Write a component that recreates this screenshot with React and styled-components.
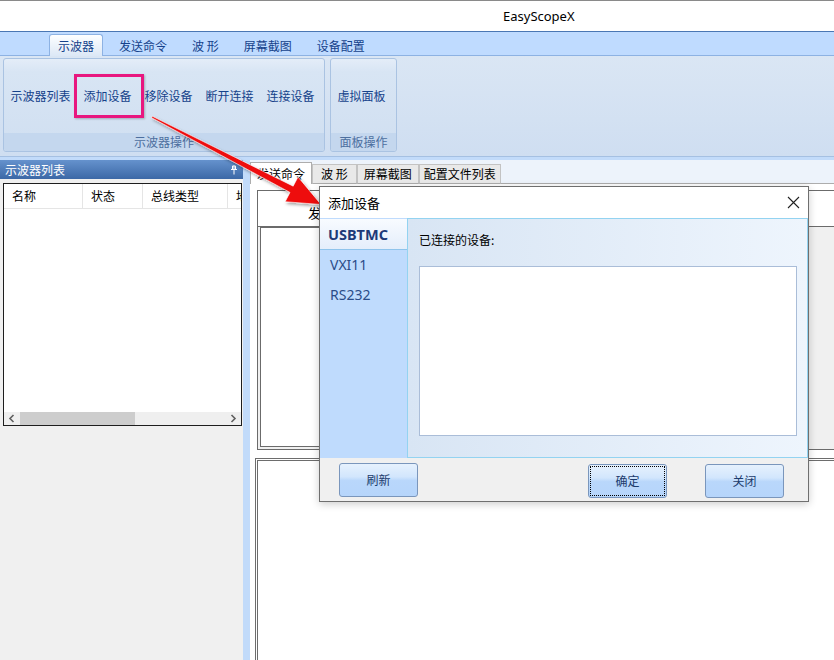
import React from 'react'
import styled, { createGlobalStyle } from 'styled-components'

const GlobalStyle = createGlobalStyle`
  html, body {
    margin: 0;
    padding: 0;
    background: #fff;
  }
  body {
    font-family: "Noto Sans CJK SC", "Noto Sans", sans-serif;
    font-size: 12px;
  }
  * {
    box-sizing: border-box;
  }
`

const Window = styled.div`
  position: relative;
  width: 834px;
  height: 660px;
  overflow: hidden;
  display: flex;
  flex-direction: column;
  background: #fff;
  color: #000;
`

const TitleBar = styled.div`
  flex: none;
  height: 31px;
  border-top: 1px solid #8a8a8a;
  background: #fff;
  padding-left: 503px;
  display: flex;
  align-items: center;
  font-family: "Noto Sans", "Noto Sans CJK SC", sans-serif;
  font-size: 13px;
`

const MenuTabs = styled.div`
  flex: none;
  height: 25px;
  background: #bfdbff;
  border-top: 1px solid #4a77b4;
  border-bottom: 1px solid #8db2e3;
  display: flex;
  align-items: flex-end;
  padding-left: 49px;
`

const MenuTab = styled.div`
  height: 22px;
  padding: 0 8px;
  margin-right: 7px;
  margin-bottom: -1px;
  display: flex;
  align-items: center;
  color: #15428b;
  line-height: 16px;
  white-space: pre;
  border: 1px solid ${p => (p.$active ? '#8db2e3' : 'transparent')};
  border-bottom: none;
  border-radius: 3px 3px 0 0;
  background: ${p => (p.$active ? 'linear-gradient(#fdfeff, #dce8f6)' : 'transparent')};
`

const Ribbon = styled.div`
  flex: none;
  height: 101px;
  background: linear-gradient(#dae6f4, #cfdef1);
  border-bottom: 1px solid #a5c0e2;
  padding: 2px 3px 4px 3px;
  display: flex;
  gap: 5px;
`

const Group = styled.div`
  width: ${p => p.$width}px;
  border: 1px solid #aac3e2;
  border-radius: 3px;
  display: flex;
  flex-direction: column;
  overflow: hidden;
  background: linear-gradient(#e4edf8 0%, #d8e5f4 14%, #d0dff1 100%);
`

const GroupBody = styled.div`
  flex: 1;
  display: flex;
  align-items: center;
`

const GroupLabel = styled.div`
  height: 18px;
  background: #c4d7ee;
  color: #4d6f9f;
  text-align: center;
  line-height: 18px;
`

const RibbonButton = styled.div`
  position: relative;
  height: 44px;
  padding: 0 6.5px;
  display: flex;
  align-items: center;
  color: #15428b;
  line-height: 16px;
  white-space: nowrap;

  &::after {
    content: '';
    display: ${p => (p.$highlight ? 'block' : 'none')};
    position: absolute;
    left: -3px;
    right: -6px;
    top: 0;
    bottom: 0;
    border: 3px solid #e8177f;
    box-shadow: 1px 1px 2px rgba(0, 0, 0, 0.25);
  }
`

const Main = styled.div`
  flex: 1;
  display: flex;
  gap: 7px;
  padding-top: 3px;
  background: #c2dbfa;
  min-height: 0;
`

const LeftPanel = styled.div`
  width: 243px;
  flex: none;
  background: #f0f0f0;
  display: flex;
  flex-direction: column;
`

const PanelHeader = styled.div`
  height: 19px;
  padding: 0 5px;
  display: flex;
  align-items: center;
  justify-content: space-between;
  color: #fff;
  line-height: 16px;
  background: linear-gradient(#6592cd, #3c68a6);
`

const ListView = styled.div`
  margin: 4px 1px 0 3px;
  height: 243px;
  border: 1px solid #1e1e1e;
  background: #fff;
  display: flex;
  flex-direction: column;
`

const ListHeader = styled.div`
  height: 25px;
  display: flex;
  border-bottom: 1px solid #e5e5e5;
  overflow: hidden;
`

const HeaderCell = styled.div`
  width: ${p => p.$width}px;
  flex: none;
  padding-left: 8px;
  display: flex;
  align-items: center;
  border-right: 1px solid #e5e5e5;
  line-height: 16px;
  white-space: nowrap;
  overflow: hidden;
`

const ListBody = styled.div`
  flex: 1;
`

const HScroll = styled.div`
  height: 13px;
  background: #efefef;
  display: flex;
  align-items: center;
  padding: 0 4px;
  gap: 4px;
`

const ScrollThumb = styled.div`
  width: 115px;
  height: 13px;
  background: #cdcdcd;
`

const RightPanel = styled.div`
  flex: 1;
  display: flex;
  flex-direction: column;
  min-width: 0;
`

const DocTabs = styled.div`
  height: 23px;
  flex: none;
  display: flex;
  align-items: flex-end;
  background: #edf3fb;
`

const DocTab = styled.div`
  height: ${p => (p.$active ? 22 : 20)}px;
  padding: 0 ${p => p.$pad || 6}px;
  margin-bottom: -1px;
  display: flex;
  align-items: center;
  line-height: 16px;
  white-space: pre;
  background: ${p => (p.$active ? '#fff' : '#e9e9e9')};
  border: 1px solid ${p => (p.$active ? '#adadad' : '#c3c3c3')};
  border-bottom: ${p => (p.$active ? 'none' : '1px solid #adadad')};
  position: relative;
  z-index: ${p => (p.$active ? 1 : 0)};
`

const DocBody = styled.div`
  flex: 1;
  background: #fff;
  border-top: 1px solid #adadad;
  padding: 6px 0 0 6px;
  display: flex;
  flex-direction: column;
`

const TopPane = styled.div`
  height: 260px;
  flex: none;
  border: 1px solid #6b6b6b;
  border-right: none;
  background: #f0f0f0;
  display: flex;
  flex-direction: column;
  margin-left: 1px;
`

const TopBar = styled.div`
  height: 36px;
  background: #fff;
  border-bottom: 1px solid #6b6b6b;
  padding: 14px 0 0 50px;
  font-size: 13px;
  line-height: 16px;
`

const TopContent = styled.div`
  flex: 1;
  padding: 0 0 2px 2px;
  display: flex;
`

const InputBox = styled.div`
  width: 520px;
  background: #fff;
  border: 1px solid #6b6b6b;
`

const BottomPane = styled.div`
  flex: 1;
  margin-top: 8px;
  margin-left: -1px;
  background: #fff;
  border-top: 3px double #6d6d6d;
  border-left: 3px double #6d6d6d;
`

const Dialog = styled.div`
  position: absolute;
  left: 319px;
  top: 186px;
  width: 490px;
  height: 316px;
  z-index: 3;
  border: 1px solid #6f6f6f;
  background: #f0f0f0;
  box-shadow: 0 2px 8px rgba(0, 0, 0, 0.2);
  display: flex;
  flex-direction: column;
`

const DialogTitle = styled.div`
  height: 31px;
  flex: none;
  background: #fff;
  padding: 0 8px 0 8px;
  display: flex;
  align-items: center;
  justify-content: space-between;
  font-size: 13px;
  line-height: 16px;
`

const DialogBody = styled.div`
  flex: 1;
  display: flex;
  background: #bfdbfd;
`

const Nav = styled.div`
  width: 87px;
  flex: none;
  display: flex;
  flex-direction: column;
  padding-top: 1px;
`

const NavItem = styled.div`
  height: ${p => (p.$active ? 31 : 30)}px;
  display: flex;
  align-items: center;
  padding-left: ${p => (p.$active ? 8 : 10)}px;
  font-family: "Noto Sans", sans-serif;
  font-size: ${p => (p.$active ? 14.5 : 14)}px;
  font-weight: ${p => (p.$active ? 700 : 400)};
  color: ${p => (p.$active ? '#1d3a78' : '#2b4c88')};
  background: ${p => (p.$active ? 'linear-gradient(#f8fbff, #e4eefb)' : 'transparent')};
  border-bottom: 1px solid ${p => (p.$active ? '#8fc4ec' : 'transparent')};
`

const ContentPanel = styled.div`
  flex: 1;
  border: 1px solid #93d3f1;
  background: linear-gradient(90deg, #d8e5f4, #eef5fd);
  padding: 13px 10px 21px 11px;
  display: flex;
  flex-direction: column;
`

const FieldLabel = styled.div`
  line-height: 16px;
  margin-bottom: 18px;
`

const DeviceList = styled.div`
  flex: 1;
  background: #fff;
  border: 1px solid #aabdd8;
`

const DialogFooter = styled.div`
  height: 43px;
  flex: none;
  display: flex;
  align-items: center;
  padding: 0 24px 0 19px;
  gap: 38px;
`

const Spacer = styled.div`
  flex: 1;
`

const DialogButton = styled.div`
  position: relative;
  width: 79px;
  height: 34px;
  border: 1px solid #7a96bc;
  border-radius: 3px;
  display: flex;
  align-items: center;
  justify-content: center;
  color: #1c3b6c;
  line-height: 16px;
  background: linear-gradient(#e6f1fd 0%, #d2e6fd 40%, #b9d7fb 52%, #b6d5fb 100%);
  margin-top: ${p => (p.$low ? 2 : 0)}px;

  &::after {
    content: '';
    display: ${p => (p.$focus ? 'block' : 'none')};
    position: absolute;
    inset: 1px;
    border: 1px dotted #000;
  }
`

const ArrowLayer = styled.svg`
  position: absolute;
  left: 0;
  top: 0;
  z-index: 2;
  pointer-events: none;
`

const PinIcon = () => (
  <svg width="8" height="10" viewBox="0 0 8 10">
    <path d="M1 4.5h6M4 0.5v9M2.5 1h3v3.5h-3z" stroke="#fff" strokeWidth="1" fill="none" />
  </svg>
)

const Chevron = ({ dir }) => (
  <svg width="8" height="9" viewBox="0 0 8 9">
    <path
      d={dir === 'left' ? 'M5.5 1L2 4.5 5.5 8' : 'M2.5 1L6 4.5 2.5 8'}
      stroke="#606060"
      strokeWidth="1.6"
      fill="none"
    />
  </svg>
)

const CloseIcon = () => (
  <svg width="13" height="13" viewBox="0 0 13 13">
    <path d="M1 1l11 11M12 1L1 12" stroke="#222" strokeWidth="1.1" />
  </svg>
)

const ribbonButtons = ['示波器列表', '添加设备', '移除设备', '断开连接', '连接设备']
const menuTabs = ['示波器', '发送命令', '波 形', '屏幕截图', '设备配置']
const columns = [
  { name: '名称', width: 79 },
  { name: '状态', width: 60 },
  { name: '总线类型', width: 85 },
  { name: '地址', width: 60 },
]

export default function App() {
  return (
    <Window>
      <GlobalStyle />
      <TitleBar>EasyScopeX</TitleBar>

      <MenuTabs>
        {menuTabs.map((t, i) => (
          <MenuTab key={t} $active={i === 0}>{t}</MenuTab>
        ))}
      </MenuTabs>

      <Ribbon>
        <Group $width={322}>
          <GroupBody>
            {ribbonButtons.map(b => (
              <RibbonButton key={b} $highlight={b === '添加设备'}>{b}</RibbonButton>
            ))}
          </GroupBody>
          <GroupLabel>示波器操作</GroupLabel>
        </Group>
        <Group $width={67}>
          <GroupBody>
            <RibbonButton>虚拟面板</RibbonButton>
          </GroupBody>
          <GroupLabel>面板操作</GroupLabel>
        </Group>
      </Ribbon>

      <Main>
        <LeftPanel>
          <PanelHeader>
            <span>示波器列表</span>
            <PinIcon />
          </PanelHeader>
          <ListView>
            <ListHeader>
              {columns.map(c => (
                <HeaderCell key={c.name} $width={c.width}>{c.name}</HeaderCell>
              ))}
            </ListHeader>
            <ListBody />
            <HScroll>
              <Chevron dir="left" />
              <ScrollThumb />
              <Spacer />
              <Chevron dir="right" />
            </HScroll>
          </ListView>
        </LeftPanel>

        <RightPanel>
          <DocTabs>
            <DocTab $active>发送命令</DocTab>
            <DocTab $pad={8}>波 形</DocTab>
            <DocTab>屏幕截图</DocTab>
            <DocTab $pad={4}>配置文件列表</DocTab>
          </DocTabs>
          <DocBody>
            <TopPane>
              <TopBar>发送</TopBar>
              <TopContent>
                <InputBox />
              </TopContent>
            </TopPane>
            <BottomPane />
          </DocBody>
        </RightPanel>
      </Main>

      <ArrowLayer width="834" height="660" viewBox="0 0 834 660">
        <defs>
          <filter id="arrowShadow" x="-10%" y="-10%" width="130%" height="130%">
            <feDropShadow dx="1.5" dy="2" stdDeviation="1.5" floodColor="#000" floodOpacity="0.35" />
          </filter>
        </defs>
        <polygon
          points="152.4,116.3 293.2,186.2 298,176.9 321,204.5 285.2,201.7 290,192.4 151.6,117.7"
          fill="#ee0a0a"
          stroke="#fff"
          strokeWidth="0.6"
          filter="url(#arrowShadow)"
        />
      </ArrowLayer>

      <Dialog>
        <DialogTitle>
          <span>添加设备</span>
          <CloseIcon />
        </DialogTitle>
        <DialogBody>
          <Nav>
            <NavItem $active>USBTMC</NavItem>
            <NavItem>VXI11</NavItem>
            <NavItem>RS232</NavItem>
          </Nav>
          <ContentPanel>
            <FieldLabel>已连接的设备:</FieldLabel>
            <DeviceList />
          </ContentPanel>
        </DialogBody>
        <DialogFooter>
          <DialogButton>刷新</DialogButton>
          <Spacer />
          <DialogButton $focus $low>确定</DialogButton>
          <DialogButton $low>关闭</DialogButton>
        </DialogFooter>
      </Dialog>
    </Window>
  )
}
